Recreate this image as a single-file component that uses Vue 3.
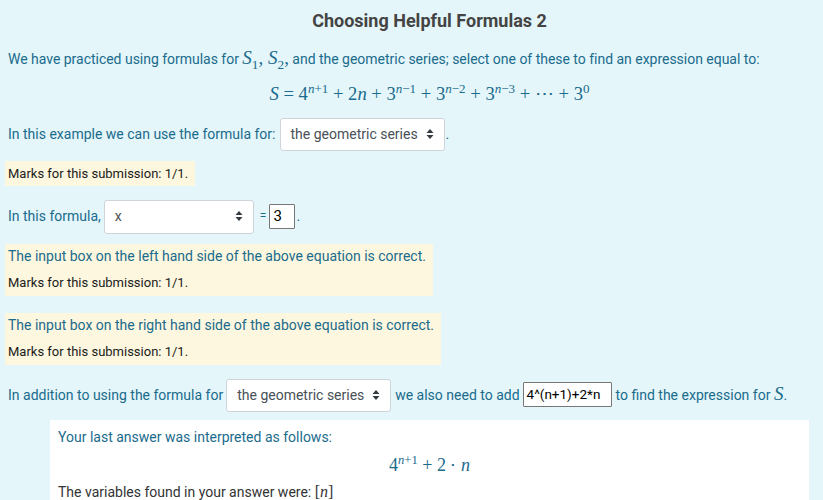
<template>
  <div class="question">
    <h2 class="title">Choosing Helpful Formulas 2</h2>

    <p class="line intro">
      We have practiced using formulas for
      <span class="math big"><i>S</i><sub>1</sub>, <i>S</i><sub>2</sub>,</span>
      and the geometric series; select one of these to find an expression equal to:
    </p>

    <p class="equation">
      <span class="math eq-main">
        <i>S</i> = 4<sup><i>n</i>+1</sup> + 2<i>n</i> + 3<sup><i>n</i>−1</sup> + 3<sup><i>n</i>−2</sup> + 3<sup><i>n</i>−3</sup> + ⋯ + 3<sup>0</sup>
      </span>
    </p>

    <div class="row first-row">
      <span>In this example we can use the formula for:</span>
      <div class="select wide">
        <span>{{ seriesLabel }}</span>
        <svg class="arrows" viewBox="0 0 8 12"><path d="M4 1 L7.5 5 H.5 Z M4 11 L.5 7 H7.5 Z" /></svg>
      </div>
      <span class="dot">.</span>
    </div>

    <div class="feedback short">
      <div class="marks">{{ marksText }}</div>
    </div>

    <div class="row second-row">
      <span>In this formula,</span>
      <div class="select var">
        <span>x</span>
        <svg class="arrows" viewBox="0 0 8 12"><path d="M4 1 L7.5 5 H.5 Z M4 11 L.5 7 H7.5 Z" /></svg>
      </div>
      <span class="equals">=</span>
      <span class="input small">3</span>
      <span class="dot-tight">.</span>
    </div>

    <div v-for="side in sides" :key="side" class="feedback" :class="side + '-box'">
      <div class="correct">The input box on the {{ side }} hand side of the above equation is correct.</div>
      <div class="marks">{{ marksText }}</div>
    </div>

    <div class="row third-row">
      <span>In addition to using the formula for</span>
      <div class="select wide">
        <span>{{ seriesLabel }}</span>
        <svg class="arrows" viewBox="0 0 8 12"><path d="M4 1 L7.5 5 H.5 Z M4 11 L.5 7 H7.5 Z" /></svg>
      </div>
      <span class="after-select">we also need to add</span>
      <span class="input answer">4^(n+1)+2*n</span>
      <span class="after-input">to find the expression for <span class="math big"><i>S</i></span>.</span>
    </div>

    <div class="validation">
      <p class="val-line">Your last answer was interpreted as follows:</p>
      <p class="val-math">
        <span class="math eq-small">4<sup><i>n</i>+1</sup> + 2 ⋅ <i>n</i></span>
      </p>
      <p class="val-vars">The variables found in your answer were: <span class="math vars">[<i>n</i>]</span></p>
    </div>
  </div>
</template>

<script setup>
const seriesLabel = 'the geometric series'
const marksText = 'Marks for this submission: 1/1.'
const sides = ['left', 'right']
</script>

<style>
html, body {
  margin: 0;
  background: #e4f6fa;
}
</style>

<style scoped>
.question {
  height: 500px;
  overflow: hidden;
  box-sizing: border-box;
  padding: 0 14px 0 5px;
  background: #e4f6fa;
  color: #1a6b8c;
  font-family: Roboto, "Liberation Sans", sans-serif;
  font-size: 14px;
  line-height: 20px;
}
.title {
  margin: 0;
  padding-top: 10px;
  padding-left: 45px;
  height: 22px;
  line-height: 21px;
  text-align: center;
  font-size: 18px;
  font-weight: 700;
  color: #444;
}
.line {
  margin: 0;
}
.intro {
  margin-top: 16px;
  padding-left: 3px;
  height: 20px;
  white-space: nowrap;
  letter-spacing: -0.02px;
}
.math {
  font-family: "Liberation Serif", "Times New Roman", serif;
  letter-spacing: 0;
}
.math sup, .math sub {
  font-size: 70%;
  line-height: 0;
}
.big {
  font-size: 19px;
}
.equation {
  margin: 16px 0 -1px;
  height: 20px;
  line-height: 20px;
  text-align: center;
  padding-left: 45px;
}
.eq-main {
  font-size: 18.6px;
}
.row {
  display: flex;
  align-items: center;
  padding-left: 3px;
  white-space: nowrap;
}
.row > span {
  padding-bottom: 2px;
}
.first-row {
  margin-top: 15px;
  gap: 4px;
}
.second-row {
  margin-top: 14px;
  gap: 3px;
}
.third-row {
  margin-top: 14px;
  gap: 3px;
}
.select {
  display: flex;
  align-items: center;
  justify-content: space-between;
  box-sizing: border-box;
  height: 33px;
  padding: 0 10px 2px;
  background: #fff;
  border: 1px solid #ced4da;
  border-radius: 3px;
  color: #495057;
}
.wide {
  width: 165px;
}
.var {
  width: 150px;
  height: 34px;
}
.arrows {
  width: 8px;
  height: 12px;
  fill: #343a40;
}
.dot {
  margin-left: -3px;
}
.equals {
  margin-left: 3px;
  font-size: 12px;
}
.row > .input {
  padding-bottom: 0;
  margin-bottom: 2px;
}
.input {
  box-sizing: border-box;
  height: 25px;
  line-height: 23px;
  padding: 0 3px;
  background: #fff;
  border: 1px solid #767676;
  border-radius: 1px;
  color: #000;
}
.small {
  width: 26px;
  font-size: 15px;
}
.dot-tight {
  margin-left: -2px;
}
.answer {
  width: 89px;
  font-size: 13.5px;
}
.after-select {
  margin-left: 1px;
}
.after-input {
  margin-left: 1px;
}
.feedback {
  background: #fdf7df;
  padding: 0 3px;
}
.correct {
  height: 26px;
  line-height: 24px;
  white-space: nowrap;
}
.marks {
  height: 26px;
  line-height: 26px;
  font-size: 13px;
  color: #1b1b1b;
  white-space: nowrap;
}
.short {
  width: 184px;
  margin-top: 10px;
  height: 25px;
}
.short .marks {
  height: 25px;
  line-height: 25px;
}
.left-box {
  width: 422px;
  margin-top: 10px;
}
.right-box {
  width: 430px;
  margin-top: 17px;
}
.validation {
  margin: 8px 0 0 45px;
  padding: 7px 8px 0;
  width: 759px;
  height: 90px;
  box-sizing: border-box;
  background: #fff;
}
.val-line {
  margin: 0;
}
.val-math {
  margin: 8px 0 0;
  text-align: center;
}
.eq-small {
  font-size: 18px;
}
.val-vars {
  margin: 6px 0 0;
  color: #333;
}
.vars {
  font-size: 16px;
}
</style>
